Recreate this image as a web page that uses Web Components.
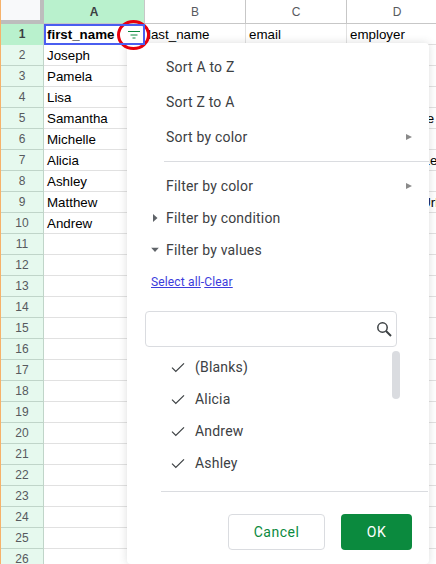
<!DOCTYPE html>
<html>
<head>
<meta charset="utf-8">
<style>
  html, body { margin: 0; padding: 0; height: 100%; overflow: hidden; background: #fff; }
</style>
</head>
<body>
<sheet-app></sheet-app>
<script>
class SheetGrid extends HTMLElement {
  constructor() {
    super();
    this.attachShadow({ mode: 'open' });
    const names = ['first_name', 'Joseph', 'Pamela', 'Lisa', 'Samantha', 'Michelle', 'Alicia', 'Ashley', 'Matthew', 'Andrew'];
    const row1 = ['', 'last_name', 'email', 'employer'];
    const under = { 5: 'Roberts Wolfe', 7: 'Hooker and Lee', 9: 'Nelson and Urban' };
    let rows = '';
    for (let i = 1; i <= 26; i++) {
      const a = names[i - 1] || '';
      const cells = i === 1
        ? `<div class="cell active"><b>${a}</b></div>` + row1.slice(1).map(t => `<div class="cell">${t}</div>`).join('')
        : `<div class="cell">${a}</div><div class="cell"></div><div class="cell"></div><div class="cell">${under[i] || ''}</div>`;
      rows += `<div class="row ${i === 1 ? 'first' : ''}"><div class="num">${i}</div>${cells}</div>`;
    }
    this.shadowRoot.innerHTML = `
      <style>
        :host { display: block; width: 436px; height: 564px; overflow: hidden; font-family: "Liberation Sans", Arial, sans-serif; }
        .grid { display: flex; flex-direction: column; border-left: 1px solid #f6b26b; }
        .head { display: grid; grid-template-columns: 43px 101px 101px 101px 101px; height: 24px; box-sizing: border-box; border-bottom: 1px solid #c7c7c7; }
        .head div { border-right: 1px solid #c7c7c7; display: flex; align-items: center; justify-content: center; font-size: 12px; color: #575a5e; box-sizing: border-box; padding-top: 1px; }
        .head .corner { background: #f8f9fa; border-right: 4px solid #bdbdbd; border-bottom: 4px solid #bdbdbd; margin-bottom: -1px; }
        .head .sel { background: #b9f1cd; color: #3c4043; font-weight: 700; }
        .row { display: grid; grid-template-columns: 43px 101px 101px 101px 101px; height: 21px; box-sizing: border-box; border-bottom: 1px solid #e1e1e1; }
        .num { background: #e6f9ee; border-right: 1px solid #c0d5c9; border-bottom: 1px solid #c0d5c9; margin-bottom: -1px; display: flex; align-items: center; justify-content: center; font-size: 12px; color: #575a5e; padding-bottom: 1px; box-sizing: border-box; }
        .first .num { background: #b9f1cd; color: #3c4043; font-weight: 700; }
        .cell { border-right: 1px solid #e1e1e1; font-size: 13.33px; color: #000; padding: 1px 0 0 3px; line-height: 20px; white-space: nowrap; overflow: hidden; box-sizing: border-box; position: relative; }
        .active { outline: 2px solid #4a5ef0; outline-offset: -2px; overflow: visible; z-index: 2; }
      </style>
      <div class="grid">
        <div class="head"><div class="corner"></div><div class="sel">A</div><div>B</div><div>C</div><div>D</div></div>
        ${rows}
      </div>`;
  }
}

class FilterButton extends HTMLElement {
  constructor() {
    super();
    this.attachShadow({ mode: 'open' });
    this.shadowRoot.innerHTML = `
      <style>
        :host { position: absolute; left: 115px; top: 19px; width: 37px; height: 32px; display: block; }
        svg { display: block; }
      </style>
      <svg width="37" height="32" viewBox="0 0 37 32">
        <rect x="4" y="6" width="24" height="18" fill="#fff"/>
        <path d="M13 12.500h12M15.500 16h7M17.500 19h3" stroke="#0b8a3e" stroke-width="1" fill="none"/>
        <ellipse cx="18.500" cy="16" rx="15" ry="13.500" fill="none" stroke="#e8000d" stroke-width="3"/>
      </svg>`;
  }
}

class MenuItem extends HTMLElement {
  constructor() {
    super();
    this.attachShadow({ mode: 'open' });
    const arrow = this.getAttribute('arrow');
    const tri = {
      right: '<svg class="lead" style="left:26px" width="5" height="8" viewBox="0 0 5 8"><path d="M0 0l4.500 4L0 8z" fill="#5f6368"/></svg>',
      down: '<svg class="lead" width="8" height="5" viewBox="0 0 8 5"><path d="M0 0h8L4 4.500z" fill="#5f6368"/></svg>'
    }[arrow] || '';
    this.shadowRoot.innerHTML = `
      <style>
        :host { display: flex; align-items: center; height: 32px; padding: 0 17px 0 39px; position: relative; font: 14px Roboto, sans-serif; letter-spacing: .2px; color: #3c4043; }
        .lead { position: absolute; left: 24px; top: 50%; transform: translateY(-50%); }
        .label { flex: 1; }
        .sub { width: 0; height: 0; border-left: 6px solid #8a8a8a; border-top: 3px solid transparent; border-bottom: 3px solid transparent; }
      </style>
      ${tri}<span class="label"><slot></slot></span>${this.hasAttribute('sub') ? '<span class="sub"></span>' : ''}`;
  }
}

class ValueRow extends HTMLElement {
  constructor() {
    super();
    this.attachShadow({ mode: 'open' });
    this.shadowRoot.innerHTML = `
      <style>
        :host { display: flex; align-items: center; height: 32px; gap: 10px; padding-left: 44px; font: 14px Roboto, sans-serif; letter-spacing: .2px; color: #3c4043; }
        svg { flex: none; }
      </style>
      <svg width="14" height="11" viewBox="0 0 14 11"><path d="M1 5.700l3.800 3.800L13 1.300" fill="none" stroke="#3c4043" stroke-width="1.200"/></svg>
      <span><slot></slot></span>`;
  }
}

class FilterMenu extends HTMLElement {
  constructor() {
    super();
    this.attachShadow({ mode: 'open' });
    this.shadowRoot.innerHTML = `
      <style>
        :host { position: absolute; left: 127px; top: 43px; width: 302px; height: 521px; box-sizing: border-box; display: flex; flex-direction: column; background: #fff; border-radius: 0 4px 4px 4px; box-shadow: 0 0 8px rgba(60,64,67,.18); font-family: Roboto, sans-serif; }
        .group { display: flex; flex-direction: column; }
        .sorts { padding-top: 8px; gap: 3px; }
        .sep { height: 1px; background: #dadce0; margin: 8px 0 8px 37px; }
        .links { margin: 8px 0 0 24px; font-size: 12px; line-height: 16px; color: #3c3cdc; letter-spacing: .15px; }
        .links a { color: inherit; text-decoration: underline; }
        .search { margin: 21px 32px 0 18px; height: 36px; box-sizing: border-box; border: 1px solid #dadce0; border-radius: 4px; display: flex; align-items: center; justify-content: flex-end; padding-right: 3px; }
        .list { position: relative; height: 128px; margin-top: 4px; overflow: hidden; }
        .thumb { position: absolute; left: 265px; top: 0; width: 8px; height: 48px; border-radius: 4px; background: #dadce0; }
        .foot-sep { height: 1px; background: #dadce0; margin: 12px 1px 0 34px; }
        .foot { display: flex; justify-content: flex-end; gap: 16px; padding: 22px 17px 0 0; }
        button { height: 36px; border-radius: 4px; font: 400 14px Roboto, sans-serif; letter-spacing: .5px; box-sizing: border-box; }
        .cancel { width: 97px; background: #fff; color: #0b8a3e; border: 1px solid #dadce0; }
        .ok { width: 71px; background: #0b8a3e; color: #fff; border: 0; }
      </style>
      <div class="group sorts">
        <menu-item>Sort A to Z</menu-item>
        <menu-item>Sort Z to A</menu-item>
        <menu-item sub>Sort by color</menu-item>
      </div>
      <div class="sep"></div>
      <div class="group">
        <menu-item sub>Filter by color</menu-item>
        <menu-item arrow="right">Filter by condition</menu-item>
        <menu-item arrow="down">Filter by values</menu-item>
      </div>
      <div class="links"><a>Select all</a>-<a>Clear</a></div>
      <div class="search">
        <svg width="18" height="18" viewBox="0 0 18 18"><circle cx="7.500" cy="7.500" r="4.700" fill="none" stroke="#3c4043" stroke-width="1.500"/><path d="M11 11l5 5" stroke="#3c4043" stroke-width="2"/></svg>
      </div>
      <div class="list">
        <value-row>(Blanks)</value-row>
        <value-row>Alicia</value-row>
        <value-row>Andrew</value-row>
        <value-row>Ashley</value-row>
        <div class="thumb"></div>
      </div>
      <div class="foot-sep"></div>
      <div class="foot"><button class="cancel">Cancel</button><button class="ok">OK</button></div>`;
  }
}

class SheetApp extends HTMLElement {
  constructor() {
    super();
    this.attachShadow({ mode: 'open' });
    this.shadowRoot.innerHTML = `
      <style>
        :host { display: block; position: relative; width: 436px; height: 564px; overflow: hidden; }
      </style>
      <sheet-grid></sheet-grid>
      <filter-menu></filter-menu>
      <filter-button></filter-button>`;
  }
}

customElements.define('sheet-grid', SheetGrid);
customElements.define('filter-button', FilterButton);
customElements.define('menu-item', MenuItem);
customElements.define('value-row', ValueRow);
customElements.define('filter-menu', FilterMenu);
customElements.define('sheet-app', SheetApp);
</script>
</body>
</html>
